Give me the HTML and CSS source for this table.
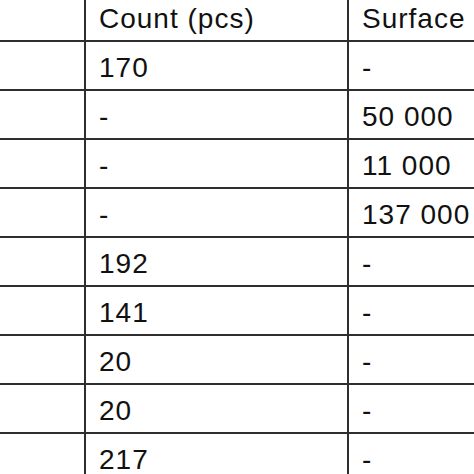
FILE: index.html
```html
<!DOCTYPE html>
<html>
<head>
<meta charset="utf-8">
<link rel="stylesheet" href="styles.css">
</head>
<body>
<div class="viewport">
<table class="data">
  <tr><td class="c1"></td><td class="c2">Count (pcs)</td><td class="c3">Surface</td></tr>
  <tr><td class="c1"></td><td class="c2">170</td><td class="c3">-</td></tr>
  <tr><td class="c1"></td><td class="c2">-</td><td class="c3">50 000</td></tr>
  <tr><td class="c1"></td><td class="c2">-</td><td class="c3">11 000</td></tr>
  <tr><td class="c1"></td><td class="c2">-</td><td class="c3">137 000</td></tr>
  <tr><td class="c1"></td><td class="c2">192</td><td class="c3">-</td></tr>
  <tr><td class="c1"></td><td class="c2">141</td><td class="c3">-</td></tr>
  <tr><td class="c1"></td><td class="c2">20</td><td class="c3">-</td></tr>
  <tr><td class="c1"></td><td class="c2">20</td><td class="c3">-</td></tr>
  <tr><td class="c1"></td><td class="c2">217</td><td class="c3">-</td></tr>
  <tr><td class="c1"></td><td class="c2"></td><td class="c3"></td></tr>
</table>
</div>
</body>
</html>
```
FILE: styles.css
```css
html, body {
  margin: 0;
  padding: 0;
  background: #ffffff;
}
.viewport {
  width: 474px;
  height: 474px;
  overflow: hidden;
}
.data {
  border-collapse: collapse;
  table-layout: fixed;
  width: 608px;
  margin-left: -41px;
  margin-top: -9px;
  font-family: "Liberation Sans", Arial, sans-serif;
  font-size: 28px;
  letter-spacing: 1px;
  color: #111111;
}
.data td {
  border: 2px solid #2e2e2e;
  height: 49px;
  box-sizing: border-box;
  padding: 10px 0 0 13px;
  vertical-align: top;
  line-height: 32px;
  white-space: nowrap;
  overflow: hidden;
}
.c1 { width: 125px; }
.c2 { width: 263px; }
.c3 { width: 220px; }
```
